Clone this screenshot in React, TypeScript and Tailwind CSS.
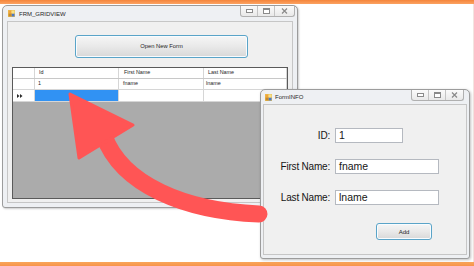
import React from "react";

function FormIcon() {
  return (
    <svg width="7" height="7" viewBox="0 0 7 7" className="shrink-0">
      <rect x="0" y="0" width="7" height="7" fill="#e8c25a" />
      <rect x="0.5" y="0.5" width="3" height="3" fill="#f3a53a" />
      <rect x="3.5" y="3.5" width="3" height="3" fill="#4a78c8" />
      <rect x="3.5" y="0.5" width="3" height="3" fill="#f7e08a" />
      <rect x="0.5" y="3.5" width="3" height="3" fill="#c98a2a" />
    </svg>
  );
}

function Controls({ w }: { w: number }) {
  return (
    <div className="flex h-[11px] border border-t-0 border-[#b0b0b0] rounded-b-[3px] bg-gradient-to-b from-[#fbfbfb] to-[#e9e9e9] overflow-hidden">
      <div className="w-[17px] flex items-center justify-center border-r border-[#c4c4c4]">
        <svg width="7" height="4" viewBox="0 0 7 4">
          <rect x="0.5" y="0.5" width="6" height="3" fill="#fff" stroke="#8a8a8a" strokeWidth="1" />
        </svg>
      </div>
      <div className="w-[17px] flex items-center justify-center border-r border-[#c4c4c4]">
        <svg width="7" height="6" viewBox="0 0 7 6">
          <rect x="0.5" y="0.5" width="6" height="5" fill="#fff" stroke="#8a8a8a" strokeWidth="1" />
          <rect x="0.5" y="0.5" width="6" height="1.5" fill="#8a8a8a" />
        </svg>
      </div>
      <div style={{ width: w }} className="flex items-center justify-center">
        <svg width="7" height="6" viewBox="0 0 7 6">
          <path d="M1 0.5 L6 5.5 M6 0.5 L1 5.5" stroke="#8a8a8a" strokeWidth="1.2" />
        </svg>
      </div>
    </div>
  );
}

function MainWindow() {
  const cell = "border-r border-[#d6d6d6] flex items-center overflow-hidden whitespace-nowrap";
  return (
    <div className="absolute left-[2px] top-[5px] w-[296px] h-[203px] rounded-t-[5px] rounded-b-[3px] border border-[#9c9c9c] bg-[#eef0f3] flex flex-col shadow-[1px_1px_2px_rgba(0,0,0,0.2)]">
      <div className="h-[15px] shrink-0 flex items-center pl-[5px] relative">
        <FormIcon />
        <span className="ml-[4px] text-[6px] text-[#1e1e1e] leading-none">FRM_GRIDVIEW</span>
        <div className="absolute right-[2px] top-0">
          <Controls w={19} />
        </div>
      </div>
      <div className="flex-1 mx-[4px] mb-[4px] border border-[#c6c6c6] bg-[#f0f0f0] flex flex-col">
        <div className="pt-[13px] pl-[67px]">
          <div className="w-[173px] h-[23px] rounded-[3px] border border-[#5aa4c8] bg-gradient-to-b from-[#f6f6f6] via-[#e9e9e9] to-[#d8d8d8] flex items-center justify-center shadow-[inset_0_0_0_1px_#f8fcff]">
            <span className="text-[5.8px] text-[#1e1e1e] leading-none">Open New Form</span>
          </div>
        </div>
        <div className="flex-1 mt-[9px] mx-[4px] mb-[3px] border border-[#5a5a5a] bg-[#ababab] flex flex-col text-[5.4px] text-[#1e1e1e] leading-none">
          <div className="h-[11px] flex bg-white border-b border-[#c8c8c8]">
            <div className={`w-[22px] ${cell}`} />
            <div className={`w-[84px] pl-[4px] ${cell}`}>Id</div>
            <div className={`w-[85px] pl-[5px] ${cell}`}>First Name</div>
            <div className={`flex-1 pl-[4px] ${cell}`}>Last Name</div>
          </div>
          <div className="h-[11px] flex bg-white border-b border-[#d6d6d6]">
            <div className={`w-[22px] ${cell}`} />
            <div className={`w-[84px] pl-[3px] ${cell}`}>1</div>
            <div className={`w-[85px] pl-[4px] ${cell}`}>fname</div>
            <div className={`flex-1 pl-[2px] ${cell}`}>lname</div>
          </div>
          <div className="h-[12px] flex bg-white border-b border-[#d6d6d6]">
            <div className={`w-[22px] pl-[4px] ${cell}`}>
              <svg width="6" height="4" viewBox="0 0 6 4">
                <path d="M0 0 L2.5 2 L0 4 Z M3 0 L5.5 2 L3 4 Z" fill="#2a2a2a" />
              </svg>
            </div>
            <div className={`w-[84px] bg-[#3192f3] ${cell}`} />
            <div className={`w-[85px] ${cell}`} />
            <div className={`flex-1 ${cell}`} />
          </div>
        </div>
      </div>
    </div>
  );
}

function TextBox({ value, w }: { value: string; w: number }) {
  return (
    <div style={{ width: w }} className="h-[15px] border border-[#b5b9c0] bg-white flex items-center pl-[3px] text-[10.5px] text-[#151515]">
      {value}
    </div>
  );
}

function InfoWindow() {
  const label = "text-right text-[10px] tracking-[-0.2px] text-[#151515] leading-none";
  return (
    <div className="absolute left-[260px] top-[89px] w-[210px] h-[170px] rounded-t-[5px] rounded-b-[3px] border border-[#9c9c9c] bg-[#eef0f3] flex flex-col shadow-[1px_1px_3px_rgba(0,0,0,0.25)]">
      <div className="h-[14px] shrink-0 flex items-center pl-[4px] relative">
        <FormIcon />
        <span className="ml-[3px] text-[6px] text-[#1e1e1e] leading-none">FormINFO</span>
        <div className="absolute right-[5px] top-0">
          <Controls w={17} />
        </div>
      </div>
      <div className="flex-1 mx-[2px] mb-[3px] border border-[#c6c6c6] bg-[#f0f0f0] flex flex-col pt-[23px]">
        <div className="grid grid-cols-[66px_auto] gap-x-[5px] gap-y-[16px] items-center">
          <div className={label}>ID:</div>
          <TextBox value="1" w={68} />
          <div className={label}>First Name:</div>
          <TextBox value="fname" w={104} />
          <div className={label}>Last Name:</div>
          <TextBox value="lname" w={104} />
        </div>
        <div className="pl-[112px] mt-[18px]">
          <div className="w-[56px] h-[17px] rounded-[3px] border border-[#5aa4c8] bg-gradient-to-b from-[#f6f6f6] via-[#e9e9e9] to-[#d8d8d8] flex items-center justify-center shadow-[inset_0_0_0_1px_#f8fcff]">
            <span className="text-[6px] text-[#1e1e1e] leading-none">Add</span>
          </div>
        </div>
      </div>
    </div>
  );
}

function Arrow() {
  return (
    <svg className="absolute inset-0 pointer-events-none" width="474" height="266" viewBox="0 0 474 266">
      <path d="M104 136 C 122 185, 185 211, 259 214" fill="none" stroke="#ff5555" strokeWidth="17" strokeLinecap="round" />
      <polygon points="70,94 79,158 133,125" fill="#ff5555" stroke="#ff5555" strokeWidth="3" strokeLinejoin="round" />
    </svg>
  );
}

export default function App() {
  return (
    <div className="relative w-[474px] h-[266px] bg-white overflow-hidden flex flex-col font-['Liberation_Sans',Arial,sans-serif]">
      <div className="h-[4px] shrink-0 bg-gradient-to-b from-[#f5853a] to-[#fba262]" />
      <div className="flex-1 border-r border-[#f3e4e0]" />
      <div className="h-[4px] shrink-0 bg-gradient-to-b from-[#f9a55a] to-[#f7944a]" />
      <MainWindow />
      <InfoWindow />
      <Arrow />
    </div>
  );
}
